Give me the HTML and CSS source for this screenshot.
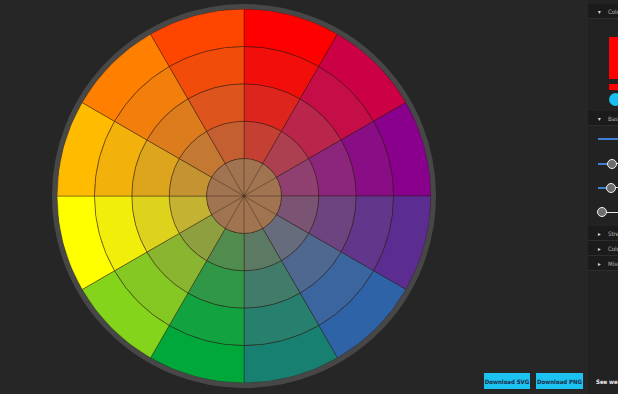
FILE: index.html
```html
<!DOCTYPE html>
<html lang="en">
<head>
    <meta charset="UTF-8">
    <meta name="viewport" content="width=device-width, initial-scale=1.0">
    <title>Colour Wheel</title>
    <link rel="stylesheet" href="styles.css">
</head>
<body>
    <div class="app">
        <main class="stage">
            <svg class="wheel" id="wheel" width="384" height="384" viewBox="-192 -192 384 384"></svg>
            <div class="downloads">
                <button class="btn">Download SVG</button>
                <button class="btn">Download PNG</button>
            </div>
        </main>

        <aside class="panel">
            <div class="folder">
                <div class="folder-title open">Colour</div>
                <div class="colour-box">
                    <div class="swatch"></div>
                    <div class="swatch-bar"></div>
                    <div class="dot"></div>
                </div>
            </div>
            <div class="folder">
                <div class="folder-title open">Basic</div>
                <div class="sliders">
                    <div class="slider" style="--v: 80px"><span class="thumb"></span></div>
                    <div class="slider" style="--v: 14px"><span class="thumb"></span></div>
                    <div class="slider" style="--v: 13px"><span class="thumb"></span></div>
                    <div class="slider" style="--v: 4px"><span class="thumb"></span></div>
                </div>
            </div>
            <div class="folder-title">Stretch</div>
            <div class="folder-title">Colour</div>
            <div class="folder-title">Misc</div>
            <div class="credit">See web-site</div>
        </aside>
    </div>

    <script>
        const wheel = document.getElementById('wheel');
        const NS = 'http://www.w3.org/2000/svg';

        // red, red-violet, violet ... red-orange (clockwise from top)
        const hues = [
            [255, 0, 0], [204, 0, 68], [136, 0, 140], [91, 45, 144],
            [47, 99, 168], [24, 128, 112], [0, 168, 60], [132, 212, 28],
            [255, 255, 0], [255, 187, 0], [255, 128, 0], [255, 70, 0]
        ];
        const centre = [160, 116, 80];
        const target = [148, 116, 90];
        const radii = [0, 37.4, 74.8, 112.2, 149.6, 187];
        const blend = [0, 0.55, 0.32, 0.12, 0]; // index = ring

        function mix(c, f) {
            return 'rgb(' + c.map((v, i) => Math.round(v * (1 - f) + target[i] * f)).join(',') + ')';
        }

        function pt(r, deg) {
            const a = deg * Math.PI / 180;
            return [(r * Math.sin(a)).toFixed(2), (-r * Math.cos(a)).toFixed(2)];
        }

        function add(tag, attrs) {
            const el = document.createElementNS(NS, tag);
            for (const k in attrs) el.setAttribute(k, attrs[k]);
            wheel.appendChild(el);
            return el;
        }

        hues.forEach((c, i) => {
            const a0 = i * 30, a1 = a0 + 30;
            for (let k = 1; k <= 4; k++) {
                const r0 = radii[k], r1 = radii[k + 1];
                const d = 'M' + pt(r1, a0).join(' ') + ' A' + r1 + ' ' + r1 + ' 0 0 1 ' + pt(r1, a1).join(' ') +
                    ' L' + pt(r0, a1).join(' ') + ' A' + r0 + ' ' + r0 + ' 0 0 0 ' + pt(r0, a0).join(' ') + ' Z';
                add('path', { d: d, fill: mix(c, blend[k]), class: 'cell' });
            }
        });

        add('circle', { cx: 0, cy: 0, r: radii[1], fill: 'rgb(' + centre.join(',') + ')', class: 'cell' });
        for (let i = 0; i < 6; i++) {
            const p = pt(radii[1], i * 30);
            const q = pt(radii[1], i * 30 + 180);
            add('line', { x1: p[0], y1: p[1], x2: q[0], y2: q[1], class: 'cell' });
        }
        add('circle', { cx: 0, cy: 0, r: 189.5, class: 'rim' });
    </script>
</body>
</html>
```

FILE: styles.css
```css
html, body {
    margin: 0;
    height: 100%;
    overflow: hidden;
}

body {
    background: #262626;
    font-family: "DejaVu Sans Condensed", "DejaVu Sans", sans-serif;
    font-stretch: condensed;
}

.app {
    display: flex;
    height: 394px;
}

.stage {
    flex: none;
    width: 588px;
    height: 394px;
    display: grid;
    background: #262626;
}

.wheel {
    grid-area: 1 / 1;
    margin: 4px 0 0 52px;
    display: block;
}

.wheel .cell {
    stroke: rgba(45, 22, 12, 0.5);
    stroke-width: 0.8;
}

.wheel .rim {
    fill: none;
    stroke: #474747;
    stroke-width: 5;
}

.downloads {
    grid-area: 1 / 1;
    justify-self: end;
    align-self: end;
    display: flex;
    gap: 6px;
    margin: 0 5px 5px 0;
}

.btn {
    width: 46px;
    height: 16px;
    padding: 0;
    border: none;
    background: #1cc2f0;
    color: #1b2c4c;
    font-family: inherit;
    font-stretch: condensed;
    font-size: 6px;
    font-weight: bold;
}

.btn + .btn {
    width: 47px;
}

/* right hand control panel */
.panel {
    flex: none;
    width: 30px;
    display: flex;
    flex-direction: column;
    padding-top: 4px;
    background: #222;
    box-sizing: border-box;
    overflow: hidden;
}

.folder-title {
    height: 14px;
    line-height: 15px;
    padding-left: 20px;
    position: relative;
    background: #1b1b1b;
    border-bottom: 1px solid #2d2d2d;
    color: #b4b4b4;
    font-size: 6px;
    white-space: nowrap;
    overflow: hidden;
}

.folder-title::before {
    content: "\25B8";
    position: absolute;
    left: 10px;
    font-size: 6px;
    color: #ddd;
}

.folder-title.open::before {
    content: "\25BE";
}

.colour-box {
    padding: 18px 0 5px 21px;
}

.swatch {
    height: 42px;
    background: #ff0000;
}

.swatch-bar {
    height: 6px;
    margin-top: 5px;
    background: #ff0000;
}

.dot {
    width: 13px;
    height: 13px;
    margin-top: 3px;
    border-radius: 50%;
    background: #17bff0;
}

.sliders {
    padding: 1px 0;
}

.slider {
    height: 24.4px;
    margin-left: 10px;
    width: 110px;
    position: relative;
    background: linear-gradient(#3f7fd4, #3f7fd4) left center / var(--v) 2px no-repeat,
                linear-gradient(#e8e8e8, #e8e8e8) left center / 100% 1px no-repeat;
}

.slider:first-child {
    background: linear-gradient(#3f7fd4, #3f7fd4) left center / var(--v) 2px no-repeat;
}

.thumb {
    position: absolute;
    top: 50%;
    left: var(--v);
    width: 8px;
    height: 8px;
    margin: -5px 0 0 -5px;
    border-radius: 50%;
    background: #6e6e6e;
    border: 1px solid #f2f2f2;
}

.credit {
    margin-top: auto;
    padding: 0 0 9px 8px;
    color: #ececec;
    font-size: 6px;
    font-weight: bold;
    white-space: nowrap;
}
```
